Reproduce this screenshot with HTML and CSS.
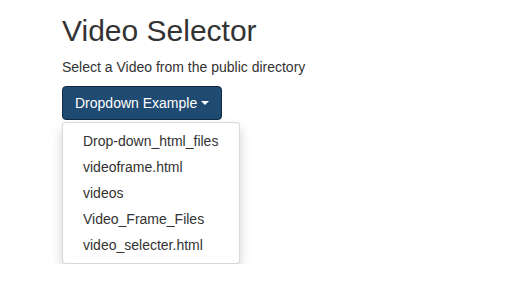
FILE: index.html
```html
<!DOCTYPE html>
<html>
<head>
<meta charset="utf-8">
<link rel="stylesheet" href="styles.css">
</head>
<body>
<div class="container">
  <h2 class="title">Video Selector</h2>
  <p class="lead-text">Select a Video from the public directory</p>
  <div class="dropdown">
    <button class="btn">Dropdown Example <span class="caret"></span></button>
    <ul class="menu">
      <li>Drop-down_html_files</li>
      <li>videoframe.html</li>
      <li>videos</li>
      <li>Video_Frame_Files</li>
      <li>video_selecter.html</li>
    </ul>
  </div>
</div>
</body>
</html>
```
FILE: styles.css
```css
html, body { margin: 0; padding: 0; background: #fff; }
body {
  font-family: "Liberation Sans", Arial, sans-serif;
  font-size: 14px;
  line-height: 1.42857;
  color: #333;
}
.container { padding: 14px 0 0 62px; }
.title {
  margin: 0 0 11px;
  font-size: 30px;
  font-weight: 500;
  line-height: 33px;
}
.lead-text { margin: 0 0 8px; }
.dropdown { display: flex; flex-direction: column; align-items: flex-start; }
.btn {
  font-family: inherit;
  font-size: 14px;
  line-height: 20px;
  padding: 6px 12px;
  color: #fff;
  background: #1f4a72;
  border: 1px solid #122b40;
  border-radius: 4px;
  display: flex;
  align-items: center;
  gap: 4px;
}
.caret {
  width: 0; height: 0;
  border-top: 4px solid #fff;
  border-left: 4px solid transparent;
  border-right: 4px solid transparent;
}
.menu {
  list-style: none;
  margin: 2px 0 0;
  padding: 5px 0;
  min-width: 176px;
  background: #fff;
  border: 1px solid rgba(0,0,0,.15);
  border-radius: 4px;
  box-shadow: 0 6px 12px rgba(0,0,0,.175);
}
.menu li { padding: 3px 20px; line-height: 20px; white-space: nowrap; }
```
